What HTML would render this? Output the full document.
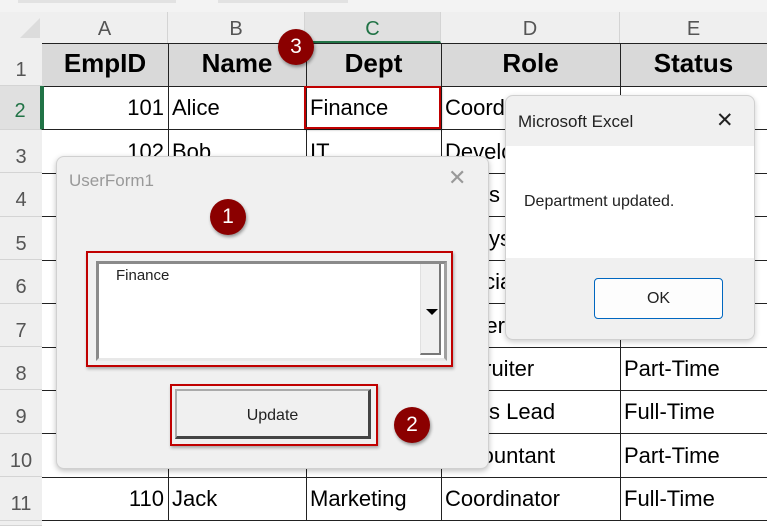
<!DOCTYPE html>
<html><head><style>
body{margin:0;width:767px;height:525px;overflow:hidden;background:#fff;position:relative;font-family:"Liberation Sans",Arial,sans-serif}
.a{position:absolute}
.ch{position:absolute;top:12px;height:31px;background:#efefef;color:#555;font-size:20px;text-align:center;line-height:34px;border-right:1px solid #d4d4d4}
.rh{position:absolute;left:0;width:42px;background:#efefef;color:#555;font-size:20px;text-align:center;border-bottom:1px solid #d4d4d4}
.c{position:absolute;font-size:22px;color:#000;white-space:nowrap;overflow:hidden;box-sizing:border-box;padding:0 4px}
.hl{position:absolute;left:42px;width:725px;height:1px;background:#222}
.vl{position:absolute;top:43px;width:1px;height:477px;background:#222}
.circ{position:absolute;width:36px;height:36px;border-radius:50%;background:#8b0000;color:#fff;font-size:21px;text-align:center;line-height:36px;box-shadow:1px 2px 3px rgba(0,0,0,.4)}
</style></head><body>
<div class="a" style="left:0;top:0;width:767px;height:12px;background:#f3f3f3"></div>
<div class="a" style="left:18px;top:0;width:158px;height:3px;background:#e2e2e2"></div>
<div class="a" style="left:218px;top:0;width:130px;height:3px;background:#e2e2e2"></div>
<div class="a" style="left:0;top:12px;width:42px;height:31px;background:#efefef"></div>
<div class="a" style="left:20px;top:18px;width:0;height:0;border-left:20px solid transparent;border-bottom:20px solid #dcdcdc"></div>
<div class="ch" style="left:42px;width:125px">A</div>
<div class="ch" style="left:168px;width:136px">B</div>
<div class="ch" style="left:305px;width:135px;background:#e0e0e0;color:#217346;border-bottom:2px solid #217346;height:29px">C</div>
<div class="ch" style="left:441px;width:178px">D</div>
<div class="ch" style="left:620px;width:147px">E</div>
<div class="a" style="left:42px;top:43px;width:725px;height:43px;background:#d9d9d9"></div>
<div class="rh" style="top:43px;height:42px;line-height:54px">1</div>
<div class="rh" style="top:86px;height:43px;line-height:50px;color:#217346;background:#e0e0e0;border-right:2px solid #217346;width:40px">2</div>
<div class="rh" style="top:130px;height:42px;line-height:54px">3</div>
<div class="rh" style="top:173px;height:43px;line-height:54px">4</div>
<div class="rh" style="top:217px;height:42px;line-height:54px">5</div>
<div class="rh" style="top:260px;height:43px;line-height:54px">6</div>
<div class="rh" style="top:304px;height:42px;line-height:54px">7</div>
<div class="rh" style="top:347px;height:42px;line-height:54px">8</div>
<div class="rh" style="top:390px;height:43px;line-height:54px">9</div>
<div class="rh" style="top:434px;height:42px;line-height:54px">10</div>
<div class="rh" style="top:477px;height:43px;line-height:54px">11</div>
<div class="rh" style="top:521px;height:4px"></div>

<div class="hl" style="top:43px"></div><div class="hl" style="top:86px"></div><div class="hl" style="top:129px"></div>
<div class="hl" style="top:173px"></div><div class="hl" style="top:216px"></div><div class="hl" style="top:260px"></div>
<div class="hl" style="top:303px"></div><div class="hl" style="top:347px"></div><div class="hl" style="top:390px"></div>
<div class="hl" style="top:433px"></div><div class="hl" style="top:477px"></div><div class="hl" style="top:520px"></div>
<div class="vl" style="left:168px"></div><div class="vl" style="left:306px"></div><div class="vl" style="left:441px"></div><div class="vl" style="left:620px"></div>

<div class="c" style="left:42px;top:48px;width:126px;text-align:center;font-weight:bold;font-size:26px">EmpID</div>
<div class="c" style="left:168px;top:48px;width:138px;text-align:center;font-weight:bold;font-size:26px">Name</div>
<div class="c" style="left:306px;top:48px;width:135px;text-align:center;font-weight:bold;font-size:26px">Dept</div>
<div class="c" style="left:441px;top:48px;width:179px;text-align:center;font-weight:bold;font-size:26px">Role</div>
<div class="c" style="left:620px;top:48px;width:147px;text-align:center;font-weight:bold;font-size:26px">Status</div>

<div class="c" style="left:42px;top:95px;width:126px;text-align:right">101</div>
<div class="c" style="left:168px;top:95px">Alice</div>
<div class="c" style="left:306px;top:95px">Finance</div>
<div class="c" style="left:441px;top:95px">Coordinator</div>
<div class="c" style="left:42px;top:139px;width:126px;text-align:right">102</div>
<div class="c" style="left:168px;top:139px">Bob</div>
<div class="c" style="left:306px;top:139px">IT</div>
<div class="c" style="left:441px;top:139px">Developer</div>
<div class="c" style="left:441px;top:182px">Sales</div>
<div class="c" style="left:441px;top:226px">Analyst</div>
<div class="c" style="left:441px;top:269px">Specialist</div>
<div class="c" style="left:441px;top:313px">Tester</div>
<div class="c" style="left:441px;top:356px">Recruiter</div>
<div class="c" style="left:620px;top:356px">Part-Time</div>
<div class="c" style="left:441px;top:399px">Sales Lead</div>
<div class="c" style="left:620px;top:399px">Full-Time</div>
<div class="c" style="left:168px;top:443px">Ivy</div>
<div class="c" style="left:441px;top:443px">Accountant</div>
<div class="c" style="left:620px;top:443px">Part-Time</div>
<div class="c" style="left:42px;top:486px;width:126px;text-align:right">110</div>
<div class="c" style="left:168px;top:486px">Jack</div>
<div class="c" style="left:306px;top:486px">Marketing</div>
<div class="c" style="left:441px;top:486px">Coordinator</div>
<div class="c" style="left:620px;top:486px">Full-Time</div>

<div class="a" style="left:42px;top:86px;width:2px;height:43px;background:#217346"></div>
<div class="a" style="left:304px;top:86px;width:133px;height:39px;border:2px solid #c00000;box-shadow:1px 1px 2px rgba(0,0,0,.3)"></div>
<div class="circ" style="left:278px;top:29px">3</div>

<div class="a" style="left:56px;top:156px;width:431px;height:311px;background:#f0f0f0;border:1px solid #d0d0d0;border-radius:8px;box-shadow:0 2px 6px rgba(0,0,0,.25)"></div>
<div class="a" style="left:69px;top:171px;font-size:17px;color:#999">UserForm1</div>
<div class="a" style="left:448px;top:166px;font-size:22px;color:#999;font-family:'DejaVu Sans',sans-serif">✕</div>
<div class="circ" style="left:210px;top:199px">1</div>
<div class="a" style="left:86px;top:251px;width:363px;height:112px;border:2px solid #c00000;box-shadow:1px 2px 3px rgba(0,0,0,.3)"></div>
<div class="a" style="left:96px;top:261px;width:345px;height:94px;background:#fff;border-top:3px solid #8a8a8a;border-left:3px solid #8a8a8a;border-bottom:3px solid #e8e8e8;border-right:3px solid #a0a0a0"></div>
<div class="a" style="left:116px;top:267px;font-size:15px;color:#222">Finance</div>
<div class="a" style="left:420px;top:264px;width:21px;height:91px;background:#f0f0f0;border-left:1px solid #e0e0e0;border-right:2px solid #777;border-bottom:2px solid #777;box-sizing:border-box"></div>
<div class="a" style="left:426px;top:309px;width:0;height:0;border-left:6px solid transparent;border-right:6px solid transparent;border-top:6px solid #000"></div>
<div class="a" style="left:170px;top:384px;width:204px;height:58px;border:2px solid #c00000;box-shadow:1px 2px 3px rgba(0,0,0,.3)"></div>
<div class="a" style="left:175px;top:389px;width:196px;height:50px;background:#f0f0f0;border-top:2px solid #aaa;border-left:2px solid #aaa;border-right:3px solid #444;border-bottom:3px solid #444;box-sizing:border-box;text-align:center;line-height:50px;font-size:16px;color:#222">Update</div>
<div class="circ" style="left:394px;top:407px">2</div>

<div class="a" style="left:505px;top:95px;width:248px;height:243px;background:#f0f0f0;border:1px solid #d0d0d0;border-radius:8px;box-shadow:0 2px 6px rgba(0,0,0,.2);overflow:hidden">
<div class="a" style="left:0;top:50px;width:248px;height:112px;background:#fff"></div>
<div class="a" style="left:12px;top:16px;font-size:17px;color:#222">Microsoft Excel</div>
<div class="a" style="left:210px;top:12px;font-size:21px;color:#222;font-family:'DejaVu Sans',sans-serif">✕</div>
<div class="a" style="left:18px;top:97px;font-size:16px;color:#222">Department updated.</div>
<div class="a" style="left:88px;top:182px;width:127px;height:39px;background:#fdfdfd;border:1px solid #0067c0;border-radius:4px;text-align:center;line-height:39px;font-size:16px;color:#222">OK</div>
</div>
</body></html>
